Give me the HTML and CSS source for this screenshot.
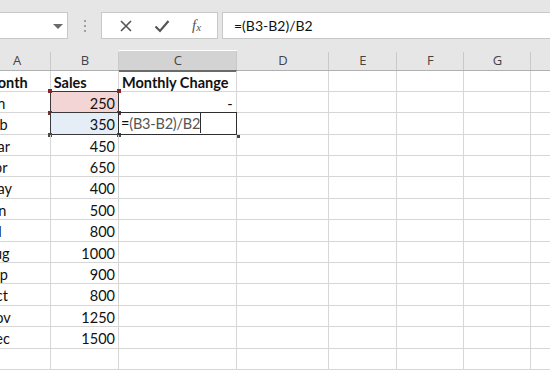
FILE: index.html
```html
<!DOCTYPE html>
<html>
<head>
<meta charset="utf-8">
<link rel="stylesheet" href="styles.css">
</head>
<body>
<div class="topbar">
  <div class="namebox"><span class="caret"></span></div>
  <div class="grip"><i></i><i></i><i></i></div>
  <div class="fbuttons">
    <svg class="ico" width="14" height="14" viewBox="0 0 14 14"><path d="M2 2 L12 12 M12 2 L2 12" stroke="#555" stroke-width="1.6" fill="none"/></svg>
    <svg class="ico" width="16" height="14" viewBox="0 0 16 14"><path d="M1.5 7.5 L6 12 L14.5 2" stroke="#555" stroke-width="2.2" fill="none"/></svg>
    <span class="fx"><i>f</i><sub>x</sub></span>
  </div>
  <div class="formula">=(B3-B2)/B2</div>
</div>
<div class="sheet">
  <div class="hd">A</div><div class="hd">B</div><div class="hd sel">C</div><div class="hd">D</div><div class="hd">E</div><div class="hd">F</div><div class="hd">G</div><div class="hd"></div>

  <div class="c b">Month</div><div class="c b">Sales</div><div class="c b">Monthly Change</div><div class="c"></div><div class="c"></div><div class="c"></div><div class="c"></div><div class="c"></div>

  <div class="c">Jan</div><div class="c n ref-red">250<span class="box red"><i class="h tl"></i><i class="h tr"></i><i class="h bl"></i><i class="h br"></i></span></div><div class="c n dash">-</div><div class="c"></div><div class="c"></div><div class="c"></div><div class="c"></div><div class="c"></div>

  <div class="c">Feb</div><div class="c n ref-blue">350<span class="box blue"><i class="h bl"></i><i class="h br"></i></span></div><div class="c active"><span class="edit"><span class="eq">=</span>(B3-B2)/B2</span><i class="h br dark"></i></div><div class="c"></div><div class="c"></div><div class="c"></div><div class="c"></div><div class="c"></div>

  <div class="c">Mar</div><div class="c n">450</div><div class="c"></div><div class="c"></div><div class="c"></div><div class="c"></div><div class="c"></div><div class="c"></div>
  <div class="c">Apr</div><div class="c n">650</div><div class="c"></div><div class="c"></div><div class="c"></div><div class="c"></div><div class="c"></div><div class="c"></div>
  <div class="c">May</div><div class="c n">400</div><div class="c"></div><div class="c"></div><div class="c"></div><div class="c"></div><div class="c"></div><div class="c"></div>
  <div class="c">Jun</div><div class="c n">500</div><div class="c"></div><div class="c"></div><div class="c"></div><div class="c"></div><div class="c"></div><div class="c"></div>
  <div class="c">Jul</div><div class="c n">800</div><div class="c"></div><div class="c"></div><div class="c"></div><div class="c"></div><div class="c"></div><div class="c"></div>
  <div class="c">Aug</div><div class="c n">1000</div><div class="c"></div><div class="c"></div><div class="c"></div><div class="c"></div><div class="c"></div><div class="c"></div>
  <div class="c">Sep</div><div class="c n">900</div><div class="c"></div><div class="c"></div><div class="c"></div><div class="c"></div><div class="c"></div><div class="c"></div>
  <div class="c">Oct</div><div class="c n">800</div><div class="c"></div><div class="c"></div><div class="c"></div><div class="c"></div><div class="c"></div><div class="c"></div>
  <div class="c">Nov</div><div class="c n">1250</div><div class="c"></div><div class="c"></div><div class="c"></div><div class="c"></div><div class="c"></div><div class="c"></div>
  <div class="c">Dec</div><div class="c n">1500</div><div class="c"></div><div class="c"></div><div class="c"></div><div class="c"></div><div class="c"></div><div class="c"></div>
  <div class="c"></div><div class="c"></div><div class="c"></div><div class="c"></div><div class="c"></div><div class="c"></div><div class="c"></div><div class="c"></div>
</div>
</body>
</html>
```
FILE: styles.css
```css
html, body {
  margin: 0;
  padding: 0;
  width: 550px;
  height: 370px;
  overflow: hidden;
  background: #fff;
  font-family: Lato, "Open Sans", sans-serif;
}

.topbar {
  height: 50px;
  background: #e6e6e6;
  display: flex;
  align-items: flex-start;
  padding-top: 12px;
  box-sizing: border-box;
}

.namebox {
  width: 68px;
  height: 27px;
  box-sizing: border-box;
  background: #fff;
  border: 1px solid #c8c8c8;
  border-left: none;
  position: relative;
}

.caret {
  position: absolute;
  left: 53px;
  top: 11px;
  width: 0;
  height: 0;
  border-left: 5px solid transparent;
  border-right: 5px solid transparent;
  border-top: 5px solid #6a6a6a;
}

.grip {
  width: 33px;
  height: 27px;
  display: flex;
  flex-direction: column;
  align-items: center;
  justify-content: center;
  gap: 3px;
}

.grip i {
  display: block;
  width: 2px;
  height: 2px;
  background: #a0a0a0;
}

.fbuttons {
  width: 117px;
  height: 27px;
  box-sizing: border-box;
  background: #fff;
  border: 1px solid #c8c8c8;
  display: flex;
  align-items: center;
  justify-content: space-around;
  padding: 0 5px 0 6px;
}

.fx {
  font-family: "Liberation Serif", serif;
  color: #555;
  font-size: 15px;
  line-height: 1;
}
.fx i { font-style: italic; }
.fx sub { font-size: 11px; font-style: italic; vertical-align: -1px; }

.formula {
  margin-left: 4px;
  flex: 1;
  height: 27px;
  box-sizing: border-box;
  background: #fff;
  border: 1px solid #c8c8c8;
  border-right: none;
  padding-left: 11px;
  font-size: 14px;
  line-height: 25px;
  color: #111;
}

.sheet {
  display: grid;
  grid-template-columns: 67.4px 68.3px 117.7px 92.6px 67.4px 67.3px 67px 60px;
  grid-template-rows: 20.5px;
  grid-auto-rows: 21.4px;
  margin-left: -16.7px;
  width: 620px;
}

.hd {
  background-color: #e6e6e6;
  background-image: linear-gradient(#c9c9c9, #c9c9c9);
  background-size: 1px 18px;
  background-position: right bottom;
  background-repeat: no-repeat;
  border-bottom: 1px solid #b0b0b0;
  box-sizing: border-box;
  font-family: "Open Sans", sans-serif;
  font-size: 13px;
  color: #444;
  text-align: center;
  line-height: 21px;
}

.hd.sel {
  background-color: #d3d3d3;
  background-size: 1px 20px;
  border-bottom: 2px solid #6a6a6a;
  height: 20.5px;
  margin-top: 1px;
  line-height: 19px;
}

.c {
  box-sizing: border-box;
  border-right: 1px solid #d6d6d6;
  border-bottom: 1px solid #d6d6d6;
  font-size: 14.5px;
  line-height: 23.5px;
  color: #111;
  padding: 0 3px;
  white-space: nowrap;
  position: relative;
}

.sheet > .c:nth-child(8n+1) { padding-left: 1px; }

.c.b { font-weight: bold; }
.c.n { text-align: right; }
.c.dash { text-align: right; padding-right: 3px; }

.ref-red { background: #f4d5d5; }
.ref-blue { background: #e5edf7; }

.box {
  position: absolute;
  left: -1px;
  top: -1px;
  right: -1px;
  bottom: -1px;
  border: 1.5px solid #3a3a3a;
  pointer-events: none;
}
.box.blue { border-top: none; }

.h {
  position: absolute;
  width: 4px;
  height: 4px;
  background: #7d2a2a;
}
.box.blue .h { background: #4a4a4a; }
.h.tl { left: -3px; top: -3px; }
.h.tr { right: -3px; top: -3px; }
.h.bl { left: -3px; bottom: -3px; }
.h.br { right: -3px; bottom: -3px; }

.c.active {
  border: 1.5px solid #2e2e2e;
  margin: -1px 0 0 -1px;
  overflow: visible;
  padding-left: 2px;
  line-height: 20px;
}

.edit {
  display: inline-block;
  border-right: 1px solid #2e2e2e;
  padding-right: 0;
  padding-top: 1px;
  letter-spacing: -0.2px;
  color: #555;
  line-height: 19px;
  height: 19px;
}
.eq { color: #111; }

.h.dark { background: #444; right: -4px; bottom: -4px; }
```
